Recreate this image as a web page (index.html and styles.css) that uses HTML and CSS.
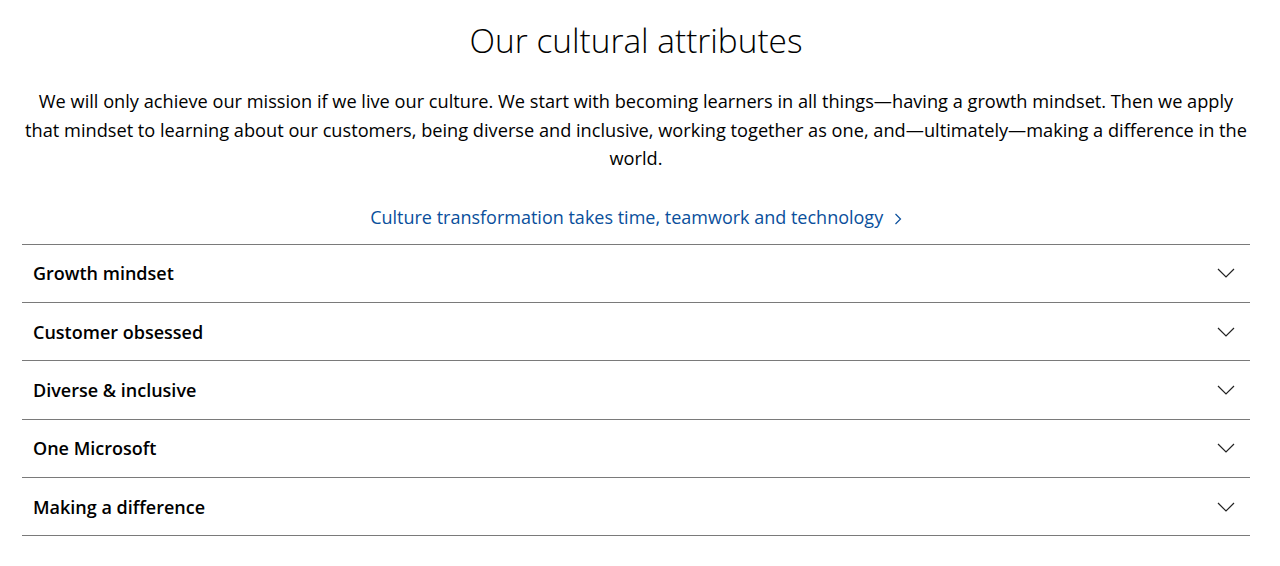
FILE: index.html
```html
<!DOCTYPE html>
<html>
<head>
    <title>Our cultural attributes</title>
    <link rel="stylesheet" href="styles.css">
</head>
<body>
    <section class="culture">
        <h1 class="culture-title">Our cultural attributes</h1>
        <p class="culture-intro">We will only achieve our mission if we live our culture. We start with becoming learners in all things—having a growth mindset. Then we apply that mindset to learning about our customers, being diverse and inclusive, working together as one, and—ultimately—making a difference in the world.</p>
        <p class="culture-more">
            <a class="link" href="#">Culture transformation takes time, teamwork and technology
                <svg class="link-arrow" width="8" height="12" viewBox="0 0 8 12"><path d="M1.5 1 L6.5 6 L1.5 11" fill="none" stroke="currentColor" stroke-width="1.2"/></svg>
            </a>
        </p>

        <div class="accordion">
            <div class="acc-row"><span>Growth mindset</span>
                <svg class="chevron" width="18" height="10" viewBox="0 0 18 10"><path d="M1 1 L9 9 L17 1" fill="none" stroke="currentColor" stroke-width="1.2"/></svg>
            </div>
            <div class="acc-row"><span>Customer obsessed</span>
                <svg class="chevron" width="18" height="10" viewBox="0 0 18 10"><path d="M1 1 L9 9 L17 1" fill="none" stroke="currentColor" stroke-width="1.2"/></svg>
            </div>
            <div class="acc-row"><span>Diverse &amp; inclusive</span>
                <svg class="chevron" width="18" height="10" viewBox="0 0 18 10"><path d="M1 1 L9 9 L17 1" fill="none" stroke="currentColor" stroke-width="1.2"/></svg>
            </div>
            <div class="acc-row"><span>One Microsoft</span>
                <svg class="chevron" width="18" height="10" viewBox="0 0 18 10"><path d="M1 1 L9 9 L17 1" fill="none" stroke="currentColor" stroke-width="1.2"/></svg>
            </div>
            <div class="acc-row"><span>Making a difference</span>
                <svg class="chevron" width="18" height="10" viewBox="0 0 18 10"><path d="M1 1 L9 9 L17 1" fill="none" stroke="currentColor" stroke-width="1.2"/></svg>
            </div>
        </div>
    </section>
</body>
</html>
```
FILE: styles.css
```css
body { margin: 0; background: #fff; color: #000; font-family: "Open Sans", Arial, sans-serif; }
.culture { padding: 0 30px 0 22px; }
.culture-title {
    margin: 18px 0 0; text-align: center;
    font-size: 33.4px; line-height: 44px; font-weight: 300;
}
.culture-intro {
    margin: 25px 0 0; text-align: center;
    font-size: 18.2px; line-height: 28.5px;
}
.culture-more { margin: 31px 0 0; text-align: center; font-size: 18px; line-height: 26px; }
.link { color: #0a4f9c; text-decoration: none; }
.link-arrow { margin-left: 6px; vertical-align: -1px; }
.accordion { margin-top: 14px; border-bottom: 1px solid #7a7a7a; }
.acc-row {
    display: flex; align-items: center; justify-content: space-between;
    height: 57.4px; padding: 0 15px 0 11px;
    border-top: 1px solid #7a7a7a;
    font-size: 18px; font-weight: 600;
}
.chevron { color: #222; }
```
